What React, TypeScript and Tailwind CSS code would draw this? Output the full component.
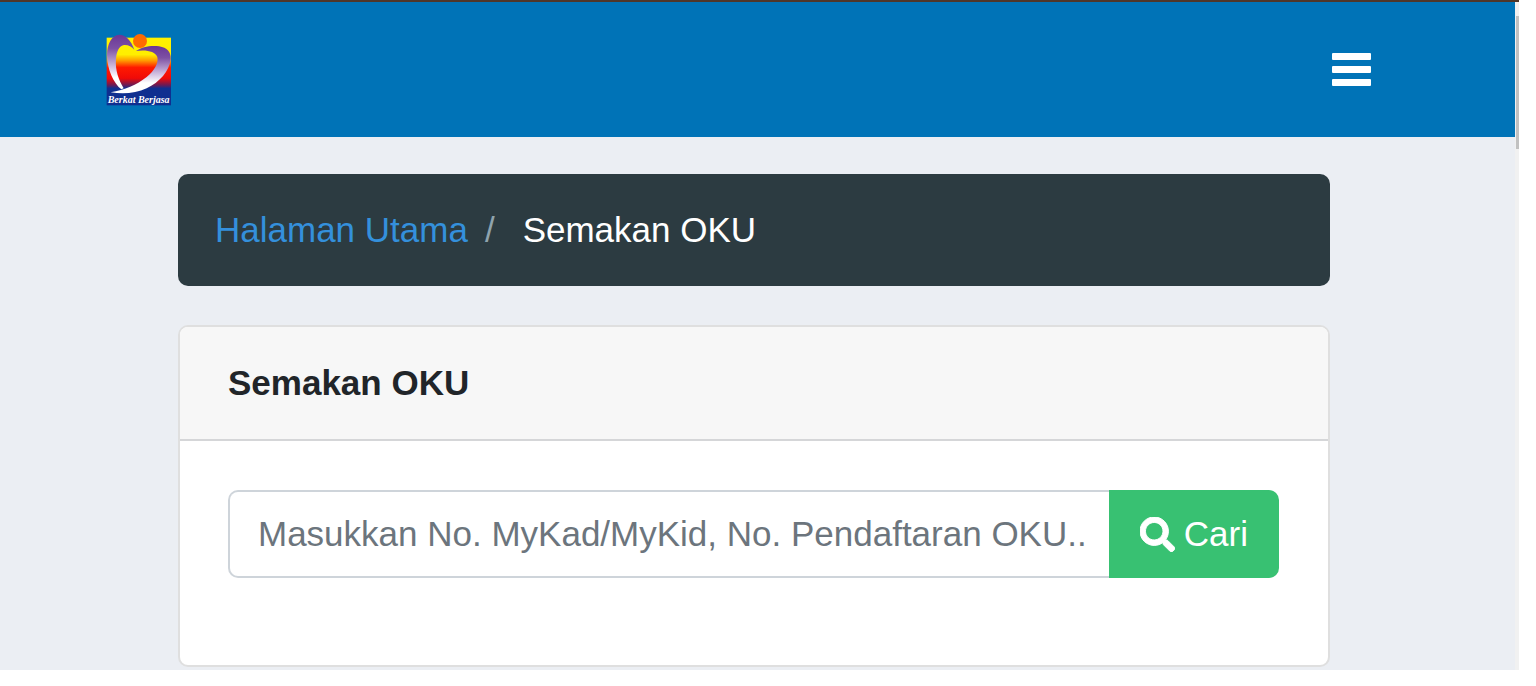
import { useState } from "react"
import { FaSearch } from "react-icons/fa"

const breadcrumb = [
  { name: "Halaman Utama", href: "#utama" },
  { name: "Semakan OKU" },
]

function Logo() {
  return (
    <svg viewBox="48 38 198 222" className="w-[66px] h-[74px]" role="img" aria-label="Berkat Berjasa">
      <defs>
        <linearGradient id="sky" x1="0" y1="0" x2="0" y2="1">
          <stop offset="0" stopColor="#fff200" />
          <stop offset="0.25" stopColor="#ffee00" />
          <stop offset="0.34" stopColor="#ff9a00" />
          <stop offset="0.44" stopColor="#ff1a00" />
          <stop offset="0.6" stopColor="#f00a08" />
          <stop offset="0.7" stopColor="#6b1a55" />
          <stop offset="0.75" stopColor="#0f2f90" />
          <stop offset="1" stopColor="#0f2f90" />
        </linearGradient>
        <linearGradient id="ribbon" x1="0" y1="0" x2="0" y2="1">
          <stop offset="0" stopColor="#6a3796" />
          <stop offset="0.25" stopColor="#7d50a4" />
          <stop offset="0.6" stopColor="#d3c2e2" />
          <stop offset="0.78" stopColor="#ffffff" />
          <stop offset="1" stopColor="#ffffff" />
        </linearGradient>
      </defs>
      <rect x="50" y="52" width="193" height="203" fill="url(#sky)" />
      <path
        d="M133 88C124 60 106 43 88 43C66 44 51 70 51 104C52 148 70 188 94 207L101 204C86 178 75 150 78 116C80 90 89 76 102 74C114 73 125 79 133 88Z"
        fill="url(#ribbon)"
      />
      <path
        d="M138 92C154 80 184 74 207 78C232 82 243 96 242 116C239 152 208 186 170 204C138 219 100 222 62 216C104 208 140 194 170 170C194 150 206 128 202 110C196 92 166 87 138 92Z"
        fill="url(#ribbon)"
      />
      <circle cx="150" cy="62" r="21" fill="#ff6a00" />
      <text
        x="53"
        y="247"
        fontSize="30"
        fontStyle="italic"
        fontWeight="700"
        fill="#ffffff"
        className="font-['Liberation_Serif',serif]"
      >
        Berkat Berjasa
      </text>
    </svg>
  )
}

function Header() {
  return (
    <header className="flex items-center justify-between h-[135px] pl-[106px] pr-[144px] bg-[#0073b7]">
      <a href="#utama">
        <Logo />
      </a>
      <button type="button" aria-label="Menu" className="flex flex-col gap-[6px] py-2">
        <span className="block w-[39px] h-[7px] rounded-[1px] bg-white" />
        <span className="block w-[39px] h-[7px] rounded-[1px] bg-white" />
        <span className="block w-[39px] h-[7px] rounded-[1px] bg-white" />
      </button>
    </header>
  )
}

function Breadcrumb() {
  return (
    <nav aria-label="Breadcrumb" className="px-[37px] py-[30px] rounded-[10px] bg-[#2c3b41]">
      <ol className="flex items-center">
        {breadcrumb.map((item, i) => (
          <li key={item.name} className="flex items-center">
            {i > 0 && <span className="pl-[17px] pr-[28px] text-[#8fa3ad]">/</span>}
            {item.href ? (
              <a href={item.href} className="text-[#3490dc]">{item.name}</a>
            ) : (
              <span aria-current="page" className="text-white">{item.name}</span>
            )}
          </li>
        ))}
      </ol>
    </nav>
  )
}

function SearchCard() {
  const [query, setQuery] = useState("")

  return (
    <section className="mt-[39px] rounded-[10px] border-2 border-[#dfdfdf] bg-white overflow-hidden">
      <h1 className="px-12 py-[30px] border-b-2 border-[#d5d6d8] bg-[#f7f7f7] font-bold text-[#212529]">
        Semakan OKU
      </h1>
      <form className="flex pl-12 pr-[49px] pt-[49px] pb-[87px]" onSubmit={(e) => e.preventDefault()}>
        <input
          type="text"
          aria-label="No. MyKad/MyKid atau No. Pendaftaran OKU"
          placeholder="Masukkan No. MyKad/MyKid, No. Pendaftaran OKU..."
          value={query}
          onChange={(e) => setQuery(e.target.value)}
          className="flex-1 min-w-0 h-[88px] pl-7 pr-6 rounded-l-[10px] border-2 border-r-0 border-[#ced4da] bg-white text-[#495057] placeholder:text-[#6c757d]"
        />
        <button
          type="submit"
          className="flex items-center gap-[9px] px-[31px] rounded-r-[10px] bg-[#38c172] text-white"
        >
          <FaSearch className="size-[35px] stroke-white stroke-[14px]" />
          Cari
        </button>
      </form>
    </section>
  )
}

export default function App() {
  return (
    <div className="min-h-screen bg-white pr-[17px] pb-4 font-['Liberation_Sans',Arial,sans-serif] text-[35px] leading-[52px]">
      <div className="border-t-2 border-[#4f3629] flex">
        <div className="flex-1 min-w-0 bg-[#ebeef3]">
          <Header />
          <main className="pt-[37px] pb-[3px] pl-[178px] pr-[185px]">
            <Breadcrumb />
            <SearchCard />
          </main>
        </div>
        {/* scrollbar */}
        <div className="w-1 pt-[14px] bg-[#f1f1f1]">
          <div className="ml-px h-[133px] bg-[#c1c1c1]" />
        </div>
      </div>
    </div>
  )
}
